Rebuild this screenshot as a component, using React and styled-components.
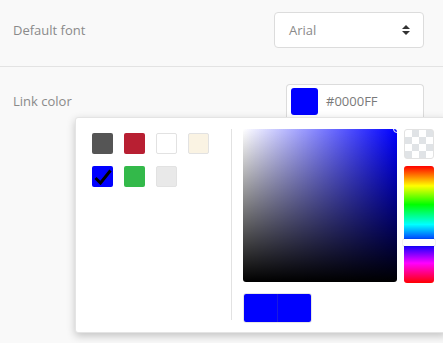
import React from "react";
import styled, { createGlobalStyle } from "styled-components";

const GlobalStyle = createGlobalStyle`
  html, body {
    margin: 0;
    padding: 0;
    background: #f9f9f9;
    overflow: hidden;
  }
  body {
    font-family: "Open Sans", "Noto Sans", sans-serif;
  }
`;

const Page = styled.div`
  position: relative;
  width: 443px;
  height: 343px;
`;

const Row = styled.div`
  display: flex;
  align-items: ${p => p.align || "center"};
  justify-content: space-between;
  height: ${p => p.h}px;
  padding: ${p => p.pad};
  box-sizing: border-box;
  border-bottom: ${p => (p.divided ? "1px solid #e3e3e3" : "none")};
`;

const Label = styled.span`
  font-size: 13px;
  color: #8a8a8a;
  padding-left: 13px;
  line-height: ${p => p.lh || "normal"};
`;

const Select = styled.div`
  width: 150px;
  height: 36px;
  box-sizing: border-box;
  border: 1px solid #dcdcdc;
  border-radius: 4px;
  background: #fff;
  display: flex;
  align-items: center;
  justify-content: space-between;
  padding: 0 12px 0 14px;
  font-size: 13px;
  color: #8a8a8a;
`;

const ColorField = styled.div`
  width: 138px;
  height: 44px;
  box-sizing: border-box;
  border: 1px solid #dcdcdc;
  border-bottom: none;
  border-radius: 4px 4px 0 0;
  background: #fff;
  display: flex;
  align-items: flex-start;
  gap: 8px;
  padding: 3px 0 0 4px;
  font-size: 13px;
  color: #7a7a7a;
`;

const FieldSwatch = styled.div`
  width: 27px;
  height: 27px;
  border-radius: 3px;
  background: #0000ff;
`;

const FieldText = styled.span`
  line-height: 27px;
`;

const Popup = styled.div`
  position: absolute;
  left: 75px;
  top: 117px;
  width: 372px;
  height: 216px;
  box-sizing: border-box;
  background: #fff;
  border: 1px solid #e4e4e4;
  border-radius: 3px;
  box-shadow: 0 3px 8px rgba(0, 0, 0, 0.22);
  display: flex;
  padding: 11px 0 0 0;
`;

const Swatches = styled.div`
  display: grid;
  grid-template-columns: repeat(4, 21px);
  grid-auto-rows: 21px;
  column-gap: 11px;
  row-gap: 12px;
  padding: 4px 0 0 16px;
  width: 139px;
  align-content: start;
`;

const Swatch = styled.div`
  width: 21px;
  height: 21px;
  box-sizing: border-box;
  border-radius: 2px;
  background: ${p => p.c};
  border: 1px solid ${p => (p.light ? "#e2e2e2" : "transparent")};
  display: flex;
  align-items: center;
  justify-content: center;
`;

const VDivider = styled.div`
  width: 1px;
  height: 191px;
  background: #e2e2e2;
`;

const Picker = styled.div`
  display: flex;
  flex-direction: column;
  padding-left: 11px;
  gap: 10px;
`;

const PickerTop = styled.div`
  display: flex;
  gap: 7px;
`;

const Saturation = styled.div`
  position: relative;
  width: 154px;
  height: 153px;
  border-radius: 3px;
  background: linear-gradient(to top, #000, rgba(0, 0, 0, 0)),
    linear-gradient(to right, #fff, #0000ff);
`;

const SatHandle = styled.div`
  position: absolute;
  right: -4px;
  top: -4px;
  width: 8px;
  height: 8px;
  border-radius: 50%;
  border: 1px solid #fff;
  box-sizing: border-box;
`;

const SideCol = styled.div`
  display: flex;
  flex-direction: column;
  gap: 7px;
`;

const Alpha = styled.div`
  width: 30px;
  height: 30px;
  box-sizing: border-box;
  border: 1px solid #e2e2e2;
  border-radius: 3px;
  background-color: #fff;
  background-image: linear-gradient(45deg, #e0e3e6 25%, transparent 25%, transparent 75%, #e0e3e6 75%),
    linear-gradient(45deg, #e0e3e6 25%, transparent 25%, transparent 75%, #e0e3e6 75%);
  background-size: 14px 14px;
  background-position: 0 0, 7px 7px;
`;

const Hue = styled.div`
  position: relative;
  width: 30px;
  height: 117px;
  border-radius: 3px;
  background: linear-gradient(
    to bottom,
    #ff0000 0%,
    #ffff00 17%,
    #00ff00 33%,
    #00ffff 50%,
    #0000ff 67%,
    #ff00ff 83%,
    #ff0000 100%
  );
`;

const HueHandle = styled.div`
  position: absolute;
  left: -1px;
  right: -1px;
  top: 73px;
  height: 7px;
  background: #fff;
  border-radius: 1px;
  box-shadow: 0 0 1px rgba(0, 0, 0, 0.5);
`;

const Preview = styled.div`
  display: flex;
  width: 67px;
  height: 28px;
  border-radius: 3px;
  overflow: hidden;
  border: 1px solid #e6e6e6;
`;

const PreviewHalf = styled.div`
  flex: 1;
  background: #0000ff;
  & + & {
    border-left: 1px solid #1a1ae0;
  }
`;

const Arrows = () => (
  <svg width="10" height="12" viewBox="0 0 10 12">
    <path d="M1 5 L5 1 L9 5 Z" fill="#333" />
    <path d="M1 7 L5 11 L9 7 Z" fill="#333" />
  </svg>
);

const Check = () => (
  <svg width="18" height="16" viewBox="0 0 18 16">
    <path d="M1.5 9 L6.5 14 L16.5 1.5" fill="none" stroke="#000" strokeWidth="3" />
  </svg>
);

const swatches = [
  { c: "#555555" },
  { c: "#b81f32" },
  { c: "#ffffff", light: true },
  { c: "#faf3e3", light: true },
  { c: "#0000ff", checked: true },
  { c: "#33b94a" },
  { c: "#e9e9e9", light: true },
];

export default function App() {
  return (
    <>
      <GlobalStyle />
      <Page>
        <Row h={67} pad="0 19px 7px 0" divided>
          <Label>Default font</Label>
          <Select>
            <span>Arial</span>
            <Arrows />
          </Select>
        </Row>
        <Row h={70} pad="17px 19px 0 0" align="flex-start">
          <Label lh="34px">Link color</Label>
          <ColorField>
            <FieldSwatch />
            <FieldText>#0000FF</FieldText>
          </ColorField>
        </Row>
        <Popup>
          <Swatches>
            {swatches.map((s, i) => (
              <Swatch key={i} c={s.c} light={s.light}>
                {s.checked && <Check />}
              </Swatch>
            ))}
          </Swatches>
          <VDivider />
          <Picker>
            <PickerTop>
              <Saturation>
                <SatHandle />
              </Saturation>
              <SideCol>
                <Alpha />
                <Hue>
                  <HueHandle />
                </Hue>
              </SideCol>
            </PickerTop>
            <Preview>
              <PreviewHalf />
              <PreviewHalf />
            </Preview>
          </Picker>
        </Popup>
      </Page>
    </>
  );
}
